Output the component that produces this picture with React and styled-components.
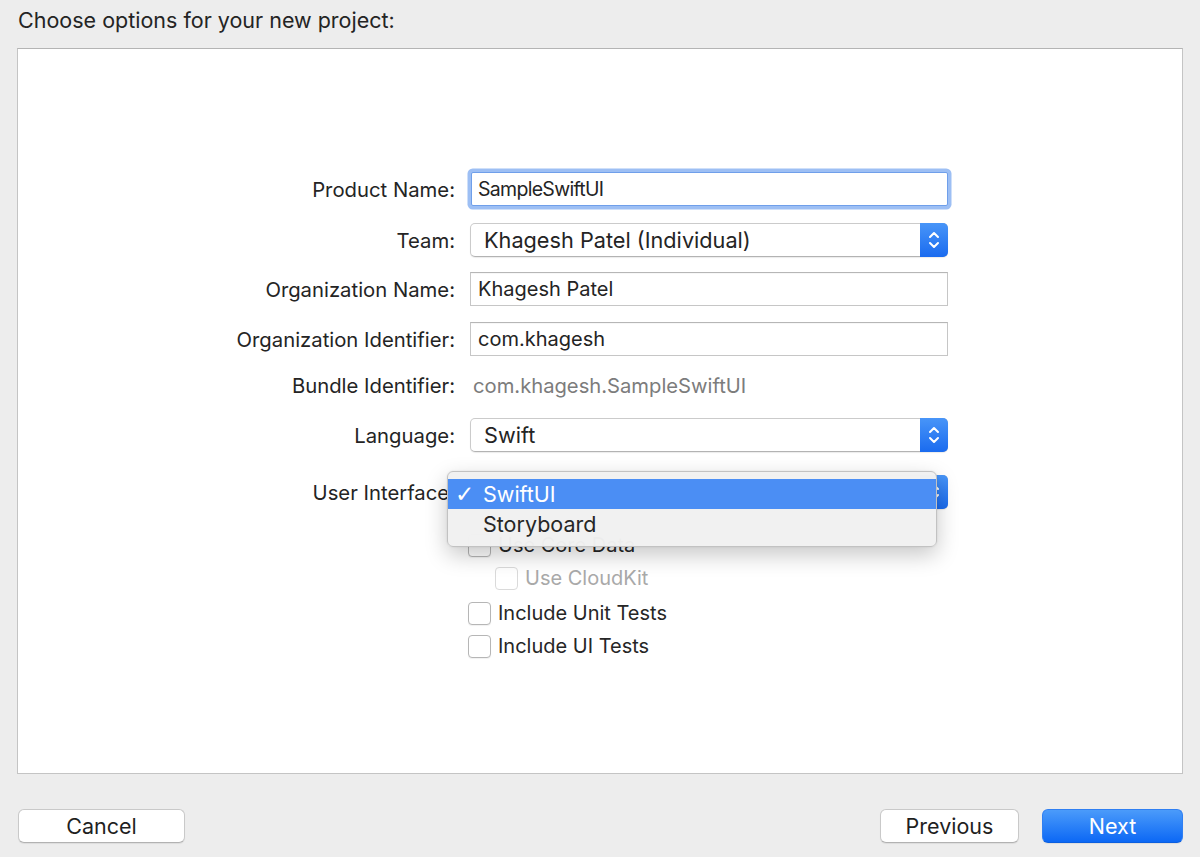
import styled, { createGlobalStyle } from 'styled-components';

const GlobalStyle = createGlobalStyle`
  * { box-sizing: border-box; }
  body {
    margin: 0;
    background: #ededed;
    font-family: Inter, "Liberation Sans", sans-serif;
    color: #242424;
  }
`;

const Page = styled.div`
  width: 1200px;
  height: 857px;
  padding: 0 17px;
  display: flex;
  flex-direction: column;
`;

const Title = styled.div`
  height: 48px;
  padding: 8px 0 0 1px;
  font-size: 21.5px;
  line-height: 25px;
`;

const Panel = styled.div`
  height: 726px;
  background: #fff;
  border: 1px solid #c4c4c4;
  border-top-color: #b4b4b4;
  padding-top: 123px;
`;

const Form = styled.div`
  display: flex;
  flex-direction: column;
`;

const Row = styled.div`
  display: grid;
  grid-template-columns: 437px 478px;
  column-gap: 15px;
  align-items: center;
  height: ${(p) => p.$h || 34}px;
  margin-top: ${(p) => p.$gap || 0}px;
`;

const Label = styled.div`
  text-align: right;
  font-size: 20.3px;
  white-space: nowrap;
`;

const Field = styled.div`
  position: relative;
  display: flex;
  align-items: center;
  height: 100%;
`;

const TextField = styled.div`
  width: 100%;
  height: 34px;
  display: flex;
  align-items: center;
  padding: 0 ${(p) => (p.$focused ? 6 : 7)}px;
  font-size: ${(p) => (p.$focused ? 19.5 : 20)}px;
  letter-spacing: ${(p) => (p.$focused ? '-0.7px' : 'normal')};
  background: #fff;
  border: 1px solid ${(p) => (p.$focused ? '#6f9fea' : '#c6c6c6')};
  border-top-color: ${(p) => (p.$focused ? '#6f9fea' : '#b6b6b6')};
  box-shadow: ${(p) =>
    p.$focused ? '0 0 0 3.5px #9dbff4' : 'inset 0 1px 0 rgba(0,0,0,0.03)'};
  border-radius: ${(p) => (p.$focused ? '2px' : '0')};
  margin-left: ${(p) => (p.$focused ? '1px' : '0')};
`;

const Static = styled.div`
  padding-left: 3px;
  font-size: 20.2px;
  color: #7c7c7c;
`;

const Popup = styled.div`
  width: 100%;
  height: 34px;
  display: flex;
  align-items: center;
  background: #fff;
  border: 1px solid #cbcbcb;
  border-bottom-color: #b3b3b3;
  border-radius: 5px;
  box-shadow: 0 1px 1px rgba(0, 0, 0, 0.08);
  font-size: 21.7px;
`;

const PopupText = styled.div`
  flex: 1;
  padding-left: 13px;
`;

const Stepper = styled.div`
  width: 28px;
  height: 34px;
  margin: -1px -1px -1px 0;
  border-radius: 0 5px 5px 0;
  background: linear-gradient(#4895f8, #1a6bef);
  display: flex;
  align-items: center;
  justify-content: center;
`;

const Menu = styled.div`
  position: absolute;
  left: -23px;
  top: -4px;
  width: 490px;
  padding: 7px 0;
  background: rgba(241, 241, 241, 0.98);
  border: 1px solid #c2c2c2;
  border-radius: 6px;
  box-shadow: 0 8px 22px rgba(0, 0, 0, 0.22), 0 0 2px rgba(0, 0, 0, 0.1);
  z-index: 2;
`;

const MenuItem = styled.div`
  position: relative;
  height: 30px;
  display: flex;
  align-items: center;
  padding-left: 35px;
  font-size: 21.5px;
  color: ${(p) => (p.$active ? '#fff' : '#262626')};
  background: ${(p) => (p.$active ? '#4b8ef4' : 'transparent')};
`;

const Check = styled.span`
  position: absolute;
  left: 7px;
  top: 1px;
  font-family: "DejaVu Sans", sans-serif;
  font-size: 23px;
  line-height: 28px;
`;

const CheckRow = styled.div`
  display: flex;
  align-items: center;
  gap: 7px;
  margin-left: ${(p) => (p.$indent ? 25 : -2)}px;
  font-size: 20px;
  color: ${(p) => (p.$disabled ? '#a9a9a9' : '#262626')};
`;

const Box = styled.span`
  width: 23px;
  height: 23px;
  border-radius: 4px;
  background: #fff;
  border: 1px solid ${(p) => (p.$disabled ? '#dadada' : '#b6b6b6')};
  box-shadow: ${(p) => (p.$disabled ? 'none' : '0 1px 1px rgba(0,0,0,0.06)')};
`;

const Footer = styled.div`
  display: flex;
  align-items: center;
  margin-top: 35px;
  padding-left: 1px;
  gap: 23px;
`;

const Spacer = styled.div`
  flex: 1;
`;

const Button = styled.button`
  width: ${(p) => p.$w}px;
  height: 34px;
  font-family: inherit;
  font-size: 21.5px;
  border-radius: 6px;
  color: ${(p) => (p.$primary ? '#fff' : '#1f1f1f')};
  background: ${(p) =>
    p.$primary ? 'linear-gradient(#4b9bfa, #0c68f5)' : '#fff'};
  border: 1px solid ${(p) => (p.$primary ? '#2f7ff2' : '#c9c9c9')};
  border-bottom-color: ${(p) => (p.$primary ? '#0b5fe0' : '#b2b2b2')};
  box-shadow: 0 1px 1px rgba(0, 0, 0, 0.07);
`;

function Chevrons() {
  return (
    <svg width="12" height="22" viewBox="0 0 12 22" fill="none">
      <path d="M2 8 L6 4 L10 8" stroke="#fff" strokeWidth="2" strokeLinecap="round" strokeLinejoin="round" />
      <path d="M2 14 L6 18 L10 14" stroke="#fff" strokeWidth="2" strokeLinecap="round" strokeLinejoin="round" />
    </svg>
  );
}

function PopupButton({ value }) {
  return (
    <Popup>
      <PopupText>{value}</PopupText>
      <Stepper>
        <Chevrons />
      </Stepper>
    </Popup>
  );
}

export default function App() {
  return (
    <>
      <GlobalStyle />
      <Page>
        <Title>Choose options for your new project:</Title>
        <Panel>
          <Form>
            <Row>
              <Label>Product Name:</Label>
              <Field>
                <TextField $focused>SampleSwiftUI</TextField>
              </Field>
            </Row>
            <Row $gap={17}>
              <Label>Team:</Label>
              <Field>
                <PopupButton value="Khagesh Patel (Individual)" />
              </Field>
            </Row>
            <Row $gap={15}>
              <Label>Organization Name:</Label>
              <Field>
                <TextField>Khagesh Patel</TextField>
              </Field>
            </Row>
            <Row $gap={16}>
              <Label>Organization Identifier:</Label>
              <Field>
                <TextField>com.khagesh</TextField>
              </Field>
            </Row>
            <Row $gap={12}>
              <Label>Bundle Identifier:</Label>
              <Field>
                <Static>com.khagesh.SampleSwiftUI</Static>
              </Field>
            </Row>
            <Row $gap={16}>
              <Label>Language:</Label>
              <Field>
                <PopupButton value="Swift" />
              </Field>
            </Row>
            <Row $gap={23}>
              <Label>User Interface:</Label>
              <Field>
                <PopupButton value="SwiftUI" />
                <Menu>
                  <MenuItem $active>
                    <Check>✓</Check>
                    SwiftUI
                  </MenuItem>
                  <MenuItem>Storyboard</MenuItem>
                </Menu>
              </Field>
            </Row>
            <Row $gap={24} $h={24}>
              <span />
              <CheckRow>
                <Box />
                Use Core Data
              </CheckRow>
            </Row>
            <Row $gap={9} $h={24}>
              <span />
              <CheckRow $indent $disabled>
                <Box $disabled />
                Use CloudKit
              </CheckRow>
            </Row>
            <Row $gap={11} $h={24}>
              <span />
              <CheckRow>
                <Box />
                Include Unit Tests
              </CheckRow>
            </Row>
            <Row $gap={9} $h={24}>
              <span />
              <CheckRow>
                <Box />
                Include UI Tests
              </CheckRow>
            </Row>
          </Form>
        </Panel>
        <Footer>
          <Button $w={167}>Cancel</Button>
          <Spacer />
          <Button $w={139}>Previous</Button>
          <Button $w={141} $primary>
            Next
          </Button>
        </Footer>
      </Page>
    </>
  );
}
